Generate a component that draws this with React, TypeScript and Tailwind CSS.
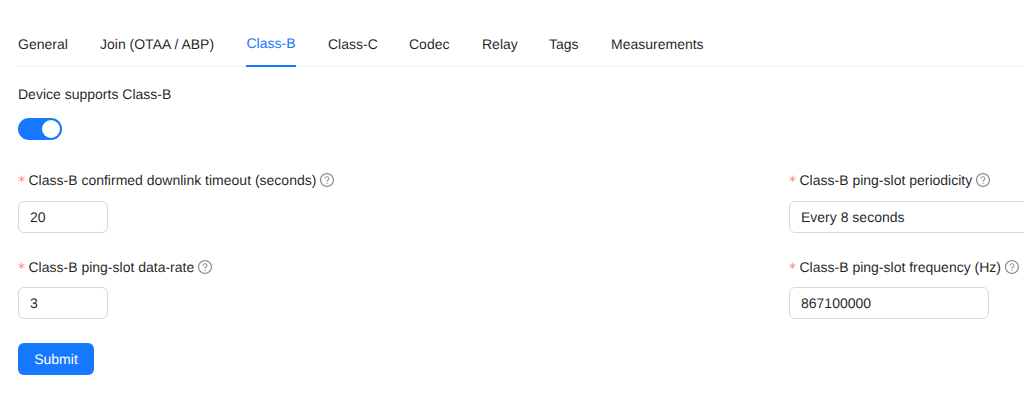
import React from "react";

function Help() {
  return (
    <svg viewBox="64 64 896 896" width="14" height="14" fill="#00000073" className="ml-1 shrink-0">
      <path d="M512 64C264.6 64 64 264.6 64 512s200.6 448 448 448 448-200.6 448-448S759.4 64 512 64zm0 820c-205.4 0-372-166.6-372-372s166.6-372 372-372 372 166.6 372 372-166.6 372-372 372z" />
      <path d="M623.6 316.7C593.6 290.4 554 276 512 276s-81.6 14.5-111.6 40.7C369.2 344 352 380.7 352 420v7.6c0 4.4 3.6 8 8 8h48c4.4 0 8-3.6 8-8V420c0-44.1 43.1-80 96-80s96 35.9 96 80c0 31.1-22 59.6-56.1 72.7-21.2 8.1-39.2 22.3-52.1 40.9-13.1 19-19.9 41.8-19.9 64.9V620c0 4.4 3.6 8 8 8h48c4.4 0 8-3.6 8-8v-22.7a48.3 48.3 0 0 1 30.9-44.8c59-22.7 97.1-74.7 97.1-132.5.1-39.3-17.1-76-48.3-103.3zM472 732a40 40 0 1 0 80 0 40 40 0 1 0-80 0z" />
    </svg>
  );
}

function Label({ text }: { text: string }) {
  return (
    <div className="flex items-center h-8 text-[14px] text-[#000000e0]">
      <span className="w-[7px] mr-[3.5px] mt-[4px] text-[14px] text-[#ff4d4f] opacity-70 font-['DejaVu_Sans',sans-serif]">*</span>
      <span>{text}</span>
      <Help />
    </div>
  );
}

function Input({ value, className }: { value: string; className: string }) {
  return (
    <div className={`h-8 flex items-center px-[11px] border border-[#d9d9d9] rounded-md bg-white text-[14px] text-[#000000e0] ${className}`}>
      {value}
    </div>
  );
}

export default function App() {
  return (
    <div className="w-[1024px] h-[410px] overflow-hidden bg-white pl-[18px] pt-[22px] font-['Liberation_Sans',Arial,sans-serif] text-[14px] text-[#000000e0] [text-rendering:geometricPrecision]">
      <div className="w-[1100px] flex gap-8 h-[45px] border-b border-[#0505050f]">
        <div className="w-[50px] h-[45px] flex items-center whitespace-nowrap">General</div>
        <div className="w-[114px] h-[45px] flex items-center whitespace-nowrap">Join (OTAA / ABP)</div>
        <div className="w-[50px] h-[45px] flex items-center justify-center whitespace-nowrap text-[#1677ff] border-b-2 border-[#1677ff]">Class-B</div>
        <div className="w-[49px] h-[45px] flex items-center whitespace-nowrap">Class-C</div>
        <div className="w-[41px] h-[45px] flex items-center whitespace-nowrap">Codec</div>
        <div className="w-[35px] h-[45px] flex items-center whitespace-nowrap">Relay</div>
        <div className="w-[30px] h-[45px] flex items-center whitespace-nowrap">Tags</div>
        <div className="h-[45px] flex items-center whitespace-nowrap">Measurements</div>
      </div>
      <div className="mt-[11px] h-8 flex items-center">Device supports Class-B</div>
      <div className="mt-[8px] w-11 h-[22px] rounded-full bg-[#1677ff] relative">
        <div className="absolute top-[2px] left-[24px] w-[18px] h-[18px] rounded-full bg-white" />
      </div>
      <div className="w-[1100px] mt-[24px] grid grid-cols-[771px_1fr]">
        <div>
          <Label text="Class-B confirmed downlink timeout (seconds)" />
          <Input value="20" className="w-[90px] mt-[5px]" />
          <div className="mt-[18px]">
            <Label text="Class-B ping-slot data-rate" />
          </div>
          <Input value="3" className="w-[90px] mt-[4px]" />
        </div>
        <div>
          <Label text="Class-B ping-slot periodicity" />
          <Input value="Every 8 seconds" className="w-[300px] mt-[5px]" />
          <div className="mt-[18px]">
            <Label text="Class-B ping-slot frequency (Hz)" />
          </div>
          <Input value="867100000" className="w-[200px] mt-[4px]" />
        </div>
      </div>
      <div className="mt-6 w-[76px] h-8 flex items-center justify-center rounded-md bg-[#1677ff] text-white">Submit</div>
    </div>
  );
}
